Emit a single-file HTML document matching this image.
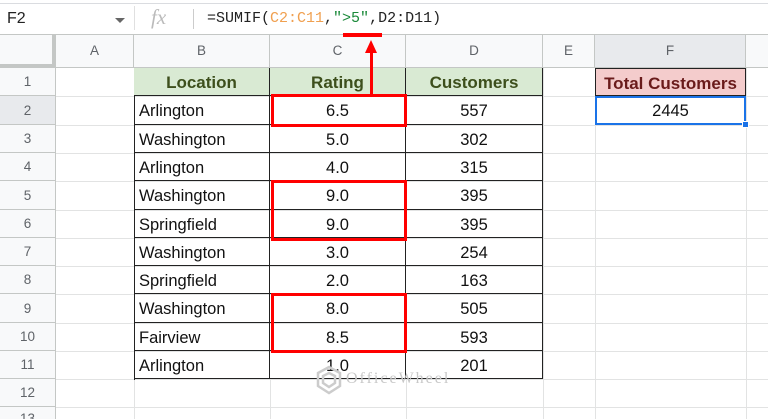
<!DOCTYPE html>
<html><head><meta charset="utf-8"><style>
*{margin:0;padding:0;box-sizing:border-box}
html,body{width:768px;height:419px;overflow:hidden}
body{background:#fff;font-family:"Liberation Sans",Arial,sans-serif;position:relative}
.a{position:absolute}
.ch{position:absolute;top:35px;height:33px;background:#f8f9fa;border-right:1px solid #c4c7c5;border-bottom:1px solid #c4c7c5;color:#5f6368;font-size:13.5px;text-align:center;line-height:32px}
.rh{position:absolute;left:0;width:56px;background:#f8f9fa;border-right:1px solid #c4c7c5;border-bottom:1px solid #c4c7c5;color:#5f6368;font-size:13.5px;text-align:center}
.gl{position:absolute;background:#e2e3e3}
.c{position:absolute;font-size:16.5px;color:#111;border-right:1.5px solid #222;border-bottom:1.5px solid #222;white-space:nowrap;padding-top:2px}
</style></head><body>
<div class="a" style="left:0;top:3px;width:768px;height:1px;background:#dadce0"></div>
<div class="a" style="left:7px;top:10px;font-size:16px;color:#222">F2</div>
<div class="a" style="left:115px;top:18px;width:0;height:0;border-left:5px solid transparent;border-right:5px solid transparent;border-top:5px solid #666"></div>
<div class="a" style="left:134px;top:6px;width:1px;height:24px;background:#e0e0e0"></div>
<div class="a" style="left:151px;top:5px;font-family:'Liberation Serif',serif;font-style:italic;font-size:21px;color:#bbb">fx</div>
<div class="a" style="left:193px;top:9px;width:1px;height:20px;background:#ccc"></div>
<div class="a" style="left:207px;top:10px;font-family:'Liberation Mono',monospace;font-size:15px;color:#222">=SUMIF(<span style="color:#f0a050">C2:C11</span>,<span style="color:#1b8a3a">"&gt;5"</span>,D2:D11)</div>
<div class="a" style="left:0;top:34px;width:768px;height:1px;background:#c4c7c5"></div>

<div class="ch" style="left:0;width:56px;border-right:4px solid #c4c7c5;border-bottom:4px solid #c4c7c5"></div>
<div class="ch" style="left:56px;width:78px">A</div>
<div class="ch" style="left:134px;width:136px">B</div>
<div class="ch" style="left:270px;width:136px">C</div>
<div class="ch" style="left:406px;width:137px">D</div>
<div class="ch" style="left:543px;width:52px">E</div>
<div class="ch" style="left:595px;width:151px;background:#e8eaed">F</div>
<div class="ch" style="left:746px;width:22px;border-right:none"></div>

<div class="rh" style="top:68px;height:28px;line-height:28px">1</div>
<div class="rh" style="top:96px;height:29px;line-height:29px;background:#e8eaed">2</div>
<div class="rh" style="top:125px;height:28px;line-height:28px">3</div>
<div class="rh" style="top:153px;height:28px;line-height:28px">4</div>
<div class="rh" style="top:181px;height:29px;line-height:29px">5</div>
<div class="rh" style="top:210px;height:28px;line-height:28px">6</div>
<div class="rh" style="top:238px;height:28px;line-height:28px">7</div>
<div class="rh" style="top:266px;height:28px;line-height:28px">8</div>
<div class="rh" style="top:294px;height:29px;line-height:29px">9</div>
<div class="rh" style="top:323px;height:28px;line-height:28px">10</div>
<div class="rh" style="top:351px;height:28px;line-height:28px">11</div>
<div class="rh" style="top:379px;height:28px;line-height:28px">12</div>
<div class="rh" style="top:407px;height:28px;line-height:24px">13</div>

<div class="gl" style="left:134px;top:68px;width:1px;height:351px"></div>
<div class="gl" style="left:270px;top:379px;width:1px;height:40px"></div>
<div class="gl" style="left:406px;top:379px;width:1px;height:40px"></div>
<div class="gl" style="left:543px;top:68px;width:1px;height:351px"></div>
<div class="gl" style="left:595px;top:68px;width:1px;height:351px"></div>
<div class="gl" style="left:746px;top:68px;width:1px;height:351px"></div>
<div class="gl" style="left:56px;top:96px;width:712px;height:1px"></div>
<div class="gl" style="left:56px;top:125px;width:712px;height:1px"></div>
<div class="gl" style="left:56px;top:153px;width:712px;height:1px"></div>
<div class="gl" style="left:56px;top:181px;width:712px;height:1px"></div>
<div class="gl" style="left:56px;top:210px;width:712px;height:1px"></div>
<div class="gl" style="left:56px;top:238px;width:712px;height:1px"></div>
<div class="gl" style="left:56px;top:266px;width:712px;height:1px"></div>
<div class="gl" style="left:56px;top:294px;width:712px;height:1px"></div>
<div class="gl" style="left:56px;top:323px;width:712px;height:1px"></div>
<div class="gl" style="left:56px;top:351px;width:712px;height:1px"></div>
<div class="gl" style="left:56px;top:379px;width:712px;height:1px"></div>
<div class="gl" style="left:56px;top:407px;width:712px;height:1px"></div>

<div class="a" style="left:134px;top:68px;width:409px;height:312px;border-left:1.5px solid #222;border-top:1.5px solid #222"></div>
<div id="t"></div>
<script>
var rows=[["Location","Rating","Customers"],["Arlington","6.5","557"],["Washington","5.0","302"],["Arlington","4.0","315"],["Washington","9.0","395"],["Springfield","9.0","395"],["Washington","3.0","254"],["Springfield","2.0","163"],["Washington","8.0","505"],["Fairview","8.5","593"],["Arlington","1.0","201"]];
var tops=[68,96,125,153,181,210,238,266,294,323,351,379];
var xs=[[134,136],[270,136],[406,137]];var h="";
for(var r=0;r<11;r++){var t=tops[r],hh=tops[r+1]-t;for(var c=0;c<3;c++){var hd=r==0;
h+='<div class="c" style="left:'+xs[c][0]+'px;top:'+t+'px;width:'+xs[c][1]+'px;height:'+hh+'px;line-height:'+(hh-2)+'px;'+(hd?'background:#d9ead3;font-weight:bold;color:#3d4f1c;font-size:17px;text-align:center;':(c==0?'padding-left:5px;':'text-align:center;'))+'">'+rows[r][c]+'</div>';}}
document.getElementById('t').innerHTML=h;
</script>

<div class="c" style="left:595px;top:68px;width:151px;height:28px;line-height:26px;background:#f4cccc;color:#6a1b1b;font-weight:bold;text-align:center;border-left:1.5px solid #222;border-top:1.5px solid #222;font-size:17px">Total Customers</div>
<div class="a" style="left:595px;top:96px;width:151px;height:29px;border:2px solid #1a73e8;text-align:center;line-height:27px;font-size:16.5px;color:#111">2445</div>
<div class="a" style="left:742px;top:121px;width:7px;height:7px;background:#1a73e8;border:1px solid #fff"></div>

<div class="a" style="left:271px;top:94px;width:136px;height:33px;border:3px solid #f00"></div>
<div class="a" style="left:271px;top:180px;width:136px;height:61px;border:3px solid #f00"></div>
<div class="a" style="left:271px;top:293px;width:136px;height:60px;border:3px solid #f00"></div>
<div class="a" style="left:343px;top:33px;width:39px;height:4px;background:#f00"></div>
<div class="a" style="left:370px;top:50px;width:3px;height:44px;background:#f00"></div>
<div class="a" style="left:365px;top:40px;width:0;height:0;border-left:6.5px solid transparent;border-right:6.5px solid transparent;border-bottom:13px solid #f00"></div>

<svg class="a" style="left:316px;top:365px" width="26" height="30" viewBox="0 0 26 30"><path d="M13 2 L24 8 L24 21 L13 28 L2 21 L2 8 Z M13 8 L19 11 L19 18 L13 22 L7 18 L7 11 Z" fill="none" stroke="#ccc" stroke-width="2.5"/></svg>
<div class="a" style="left:346px;top:370px;font-family:'Liberation Serif',serif;font-size:16px;letter-spacing:2px;color:#c8c8c8">OfficeWheel</div>
</body></html>
